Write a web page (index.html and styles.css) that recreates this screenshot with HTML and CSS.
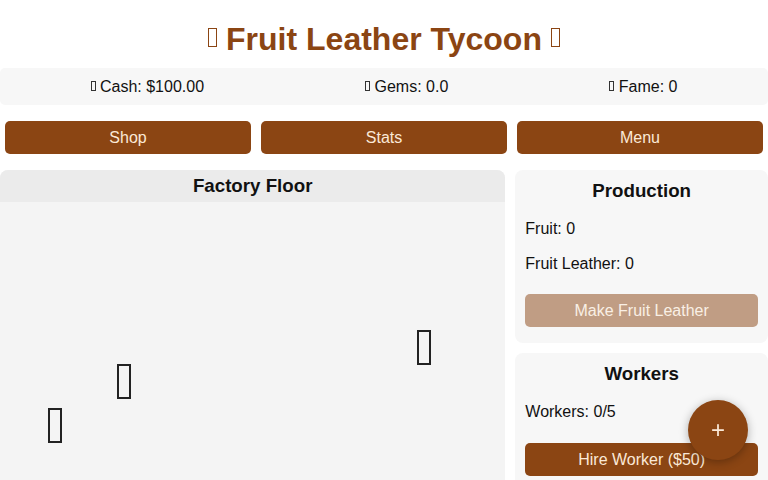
FILE: index.html
```html
<!DOCTYPE html>
<html lang="en">
<head>
<meta charset="utf-8">
<title>Fruit Leather Tycoon</title>
<link rel="stylesheet" href="styles.css">
</head>
<body>
<h1 class="title"><span class="tofu tofu-title" role="img" aria-label="🍎"></span> Fruit Leather Tycoon <span class="tofu tofu-title" role="img" aria-label="🍓"></span></h1>
<div class="stats-bar">
  <span class="stat"><span class="tofu tofu-small" role="img" aria-label="💵"></span> Cash: $100.00</span>
  <span class="stat"><span class="tofu tofu-small" role="img" aria-label="💎"></span> Gems: 0.0</span>
  <span class="stat"><span class="tofu tofu-small" role="img" aria-label="⭐"></span> Fame: 0</span>
</div>
<nav class="nav">
  <button class="btn nav-btn">Shop</button>
  <button class="btn nav-btn">Stats</button>
  <button class="btn nav-btn">Menu</button>
</nav>
<main class="main">
  <section class="floor">
    <h3 class="floor-head">Factory Floor</h3>
    <div class="floor-canvas">
      <span class="tofu fruit" role="img" aria-label="🍎" style="left:48px;top:206px"></span>
      <span class="tofu fruit" role="img" aria-label="🍌" style="left:117px;top:162px"></span>
      <span class="tofu fruit" role="img" aria-label="🍇" style="left:417px;top:128px"></span>
    </div>
  </section>
  <aside class="side">
    <div class="panel">
      <h3 class="panel-title">Production</h3>
      <p class="line">Fruit: 0</p>
      <p class="line">Fruit Leather: 0</p>
      <button class="btn panel-btn disabled">Make Fruit Leather</button>
    </div>
    <div class="panel">
      <h3 class="panel-title">Workers</h3>
      <p class="line">Workers: 0/5</p>
      <button class="btn panel-btn">Hire Worker ($50)</button>
    </div>
  </aside>
</main>
<button class="fab">+</button>
</body>
</html>
```
FILE: styles.css
```css
html, body {
  margin: 0;
  padding: 0;
  background: #ffffff;
  font-family: "Liberation Sans", Arial, sans-serif;
  color: #111;
  overflow: hidden;
}
.title {
  margin: 21px 0 10px;
  font-size: 32px;
  line-height: 37px;
  font-weight: bold;
  text-align: center;
  color: #8b4513;
}
.tofu {
  display: inline-block;
  box-sizing: border-box;
  border: 1px solid currentColor;
}
.tofu-title {
  width: 9px;
  height: 19px;
  border-width: 1.5px;
  vertical-align: 3px;
}
.tofu-small {
  width: 5px;
  height: 10px;
  vertical-align: 1px;
  color: #333;
}
.stats-bar {
  display: flex;
  justify-content: space-around;
  align-items: center;
  height: 37px;
  box-sizing: border-box;
  padding: 0 10px;
  background: #f7f7f7;
  border-radius: 5px;
  font-size: 16px;
  line-height: 19px;
}
.nav {
  display: flex;
  margin-top: 11px;
}
.btn {
  font-family: "Liberation Sans", Arial, sans-serif;
  font-size: 16px;
  line-height: 19px;
  border: none;
  border-radius: 5px;
  background: #8b4513;
  color: #fbe9d7;
  cursor: pointer;
}
.nav-btn {
  flex: 1;
  margin: 5px;
  padding: 7px 0;
}
.main {
  display: grid;
  grid-template-columns: 2fr 1fr;
  gap: 10px;
  margin-top: 11px;
  align-items: start;
}
.floor {
  border-radius: 8px;
  background: #f4f4f4;
  min-height: 420px;
  display: flex;
  flex-direction: column;
}
.floor-head {
  margin: 0;
  padding: 5px 0 5px;
  font-size: 18.72px;
  line-height: 22px;
  text-align: center;
  background: #ebebeb;
  border-radius: 8px 8px 0 0;
}
.floor-canvas {
  position: relative;
  flex: 1;
}
.fruit {
  position: absolute;
  width: 14px;
  height: 35px;
  border-width: 2px;
  color: #222;
}
.side {
  display: flex;
  flex-direction: column;
  gap: 10px;
}
.panel {
  background: #f7f7f7;
  border-radius: 8px;
  padding: 10px 10px 16px;
}
.panel-title {
  margin: 0 0 18.7px;
  font-size: 18.72px;
  line-height: 21.5px;
  text-align: center;
}
.line {
  margin: 16px 0 0;
  font-size: 16px;
  line-height: 18.4px;
}
.panel-title + .line {
  margin-top: 0;
}
.panel-btn {
  display: block;
  width: 100%;
  margin-top: 21px;
  padding: 7px 0;
}
.disabled {
  opacity: 0.5;
  cursor: default;
}
.fab {
  position: fixed;
  right: 20px;
  bottom: 20px;
  width: 60px;
  height: 60px;
  border: none;
  border-radius: 50%;
  background: #8b4513;
  color: #fbe9d7;
  font-family: "Liberation Sans", Arial, sans-serif;
  font-size: 24px;
  line-height: 24px;
  padding: 0;
  box-shadow: 0 2px 10px rgba(0, 0, 0, 0.3);
}
```
